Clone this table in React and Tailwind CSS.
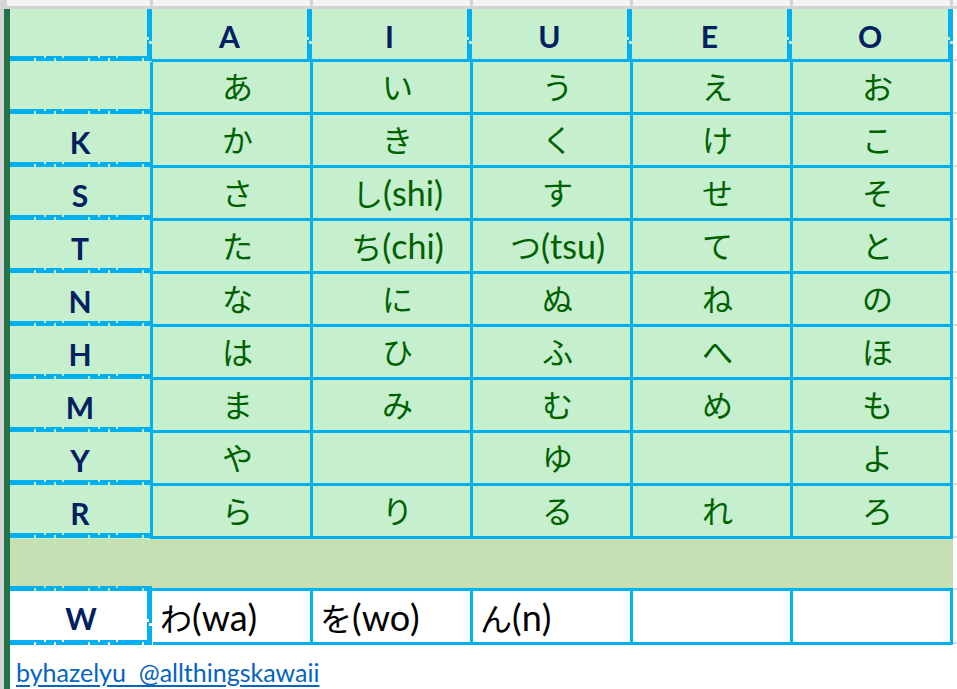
const HEAD = ['A', 'I', 'U', 'E', 'O']

const ROWS = [
  ['', ['あ', 'い', 'う', 'え', 'お']],
  ['K', ['か', 'き', 'く', 'け', 'こ']],
  ['S', ['さ', 'し(shi)', 'す', 'せ', 'そ']],
  ['T', ['た', 'ち(chi)', 'つ(tsu)', 'て', 'と']],
  ['N', ['な', 'に', 'ぬ', 'ね', 'の']],
  ['H', ['は', 'ひ', 'ふ', 'へ', 'ほ']],
  ['M', ['ま', 'み', 'む', 'め', 'も']],
  ['Y', ['や', '', 'ゆ', '', 'よ']],
  ['R', ['ら', 'り', 'る', 'れ', 'ろ']],
]

const W_ROW = ['わ(wa)', 'を(wo)', 'ん(n)', '', '']

const font = "font-['Lato','Noto_Sans_CJK_JP',sans-serif]"

// kana in CJK size, romaji a bit larger like Calibri in the sheet
function Kana({ text, big }) {
  const i = text.indexOf('(')
  if (i < 0) return <span>{text}</span>
  return (
    <span>
      {text.slice(0, i)}
      <span className={big ? 'text-[36px]' : 'text-[34px]'}>{text.slice(i)}</span>
    </span>
  )
}

// dashed cyan bar used for the label column edges
function DashH() {
  return (
    <div className="h-[5px] flex flex-col">
      <div className="h-[2px] bg-[repeating-linear-gradient(90deg,#00b0f0_0px,#00b0f0_34px,transparent_34px,transparent_36px,#00b0f0_36px,#00b0f0_52px,transparent_52px,transparent_54px)]" />
      <div className="h-[3px] bg-[repeating-linear-gradient(90deg,#00b0f0_0px,#00b0f0_24px,transparent_24px,transparent_26px,#00b0f0_26px,#00b0f0_44px,transparent_44px,transparent_46px,#00b0f0_46px,#00b0f0_54px)]" />
    </div>
  )
}

function DashV() {
  return (
    <div className="w-[5px] self-stretch flex">
      <div className="w-[2px] bg-[linear-gradient(180deg,#00b0f0_0px,#00b0f0_28px,transparent_28px,transparent_31px,#00b0f0_31px,#00b0f0_100%)]" />
      <div className="w-[3px] bg-[linear-gradient(180deg,#00b0f0_0px,#00b0f0_32px,transparent_32px,transparent_35px,#00b0f0_35px,#00b0f0_100%)]" />
    </div>
  )
}

function GridStub() {
  return (
    <div className="w-[4px] self-stretch flex flex-col justify-end">
      <div className="h-[2px] mb-[1px] bg-[#d9d9d9]" />
    </div>
  )
}

function TopStrip() {
  const cols = [143, 160, 160, 160, 160, 160]
  return (
    <div className="flex flex-col">
      <div className="h-[6px] flex bg-[#f3f3f3]">
        <div className="w-[7px] bg-[#d4d4d4]" />
        <div className="w-[3px]" />
        {cols.map((w, i) => (
          <div key={i} className={`flex ${i === 0 ? 'w-[143px]' : 'w-[160px]'}`}>
            <div className="flex-1" />
            <div className="w-[3px] bg-[#d4d4d4]" />
          </div>
        ))}
      </div>
      <div className="h-[3px] bg-[#d4d4d4]" />
    </div>
  )
}

function HeaderRow() {
  return (
    <div className="flex h-[53px]">
      <div className="w-[142px] flex flex-col bg-[#c6efce]">
        <div className="h-[47px] flex">
          <div className="flex-1" />
          <DashV />
        </div>
        <DashH />
      </div>
      {HEAD.map((h, i) => (
        <div key={h} className={`${i === 4 ? 'w-[161px]' : 'w-[160px]'} flex flex-col`}>
          <div className="h-[50px] flex bg-[#c6efce]">
            <div className="flex-1 flex items-center justify-center pt-[5px] text-[30px] font-bold text-[#002060]">
              {h}
            </div>
            <DashV />
          </div>
          <div className="h-[3px] bg-[#00b0f0]" />
        </div>
      ))}
      <GridStub />
    </div>
  )
}

function KanaRow({ label, cells }) {
  return (
    <div className="flex h-[53px]">
      <div className="w-[143px] flex border-r-[3px] border-[#00b0f0] bg-[#c6efce]">
        <div className="flex-1 flex flex-col">
          <div className="h-[47px] flex items-center justify-center pt-[7px] text-[30px] font-bold text-[#002060]">
            {label}
          </div>
          <DashH />
        </div>
      </div>
      {cells.map((c, i) => (
        <div
          key={i}
          className="w-[160px] border-r-[3px] border-b-[3px] border-[#00b0f0] bg-[#c6efce] flex items-center justify-center pl-[12px] text-[31px] text-[#006100] leading-none"
        >
          <Kana text={c} />
        </div>
      ))}
      <GridStub />
    </div>
  )
}

function GapRow() {
  return (
    <div className="flex h-[52px]">
      <div className="w-[143px] flex flex-col bg-[#c6e0b4]">
        <div className="h-[47px]" />
        <DashH />
      </div>
      <div className="w-[800px] flex flex-col">
        <div className="h-[49px] bg-[#c6e0b4]" />
        <div className="h-[3px] bg-[#00b0f0]" />
      </div>
      <GridStub />
    </div>
  )
}

function WRow() {
  return (
    <div className="flex h-[54px]">
      <div className="w-[143px] flex bg-white">
        <div className="w-[137px] flex flex-col">
          <div className="h-[49px] flex items-center justify-center pl-[5px] pt-[6px] text-[30px] font-bold text-[#002060]">
            W
          </div>
          <DashH />
        </div>
        <DashV />
        <div className="w-[1px]" />
      </div>
      {W_ROW.map((c, i) => (
        <div
          key={i}
          className="w-[160px] border-r-[3px] border-b-[3px] border-[#00b0f0] bg-white flex items-center pl-[7px] text-[32px] text-black leading-none"
        >
          <Kana text={c} big />
        </div>
      ))}
      <GridStub />
    </div>
  )
}

export default function App() {
  return (
    <div className={`w-[957px] h-[689px] overflow-hidden bg-white flex flex-col ${font}`}>
      <TopStrip />
      <div className="flex flex-1 min-h-0">
        <div className="w-[4px] bg-[#d4d4d4]" />
        <div className="w-[6px] bg-[#217346]" />
        <div className="flex-1 flex flex-col">
          <HeaderRow />
          {ROWS.map(([label, cells], i) => (
            <KanaRow key={i} label={label} cells={cells} />
          ))}
          <GapRow />
          <WRow />
          <div className="pl-[6px] pt-[15px] whitespace-pre text-[25px] leading-none text-[#0563c1] underline underline-offset-[3px]">
            {'byhazelyu  @allthingskawaii'}
          </div>
        </div>
      </div>
    </div>
  )
}
